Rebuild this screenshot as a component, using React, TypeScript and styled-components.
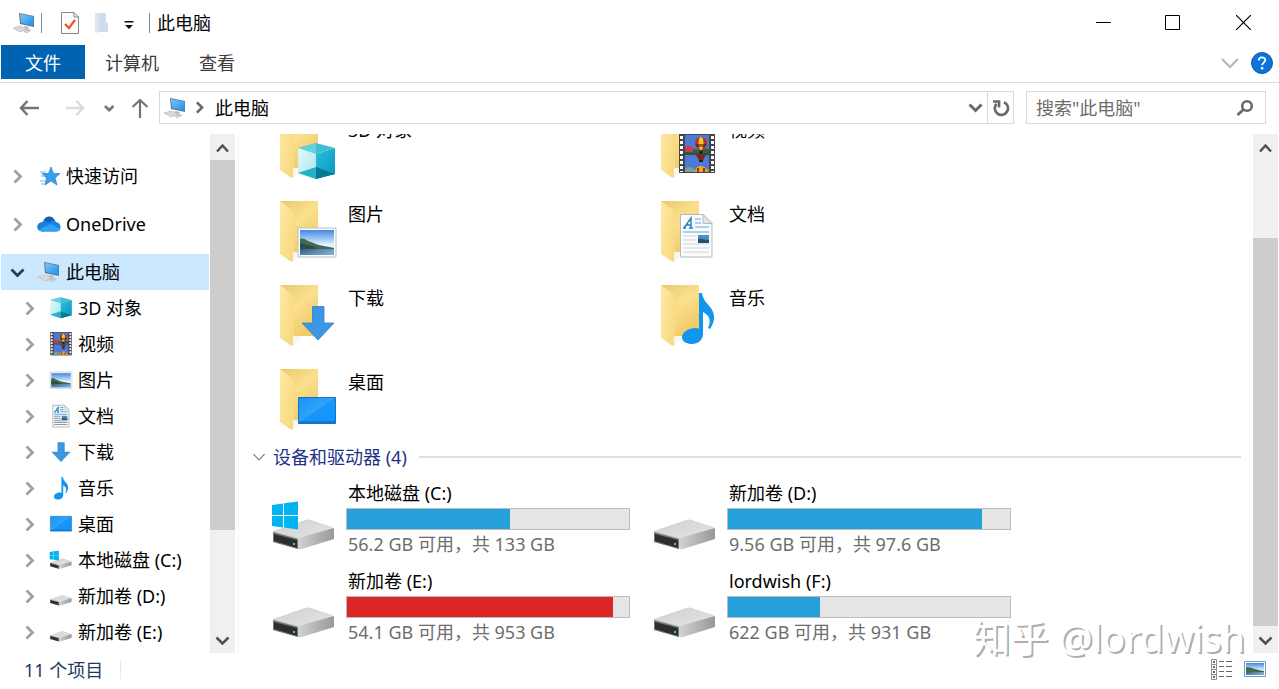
import React from "react";
import styled, { createGlobalStyle } from "styled-components";

const GlobalStyle = createGlobalStyle`
  *, *::before, *::after { box-sizing: border-box; }
  body {
    margin: 0;
    background: #fff;
    color: #111;
    font-family: "Noto Sans", "Noto Sans CJK SC", sans-serif;
    font-size: 18px;
    line-height: 24px;
  }
  button, input {
    margin: 0;
    padding: 0;
    border: 0;
    background: none;
    color: inherit;
    font: inherit;
    outline: none;
  }
  svg { display: block; flex: none; }
  ul { margin: 0; padding: 0; list-style: none; }
`;

/* ---------- layout parts ---------- */

const Window = styled.div`
  position: relative;
  display: flex;
  flex-direction: column;
  height: 100vh;
  overflow: hidden;
  background: #fff;
`;

const TitleBar = styled.header`
  display: flex;
  align-items: center;
  height: 45px;
  flex: none;
  padding: 0 1px 0 12px;
`;

const QuickTools = styled.div`
  display: flex;
  align-items: center;
  flex: 1;
`;

const Divider = styled.span<{ $left: number; $right: number }>`
  width: 1px;
  height: 20px;
  margin: 0 ${(p) => p.$right}px 0 ${(p) => p.$left}px;
  background: #8a8a8a;
`;

const ToolButton = styled.button<{ $gap: number }>`
  display: flex;
  margin-right: ${(p) => p.$gap}px;
`;

const Title = styled.h1`
  margin: 0;
  font-size: 18px;
  font-weight: 400;
  line-height: 24px;
  color: #000;
`;

const CaptionButton = styled.button`
  display: flex;
  align-items: center;
  justify-content: center;
  width: 70px;
  height: 45px;
`;

const Ribbon = styled.nav`
  display: flex;
  align-items: flex-start;
  flex: none;
  height: 38px;
  padding: 0 6px 0 1px;
  border-bottom: 1px solid #dadbdc;
`;

const Tab = styled.button<{ $active?: boolean }>`
  height: 34px;
  padding: 2px ${(p) => (p.$active ? 24 : 20)}px 0;
  background: ${(p) => (p.$active ? "#0063b1" : "transparent")};
  color: ${(p) => (p.$active ? "#fff" : "#3b3b3b")};
`;

const RibbonEnd = styled.div`
  display: flex;
  align-items: center;
  gap: 12px;
  height: 36px;
  margin-left: auto;
`;

const IconButton = styled.button`
  display: flex;
  align-items: center;
  justify-content: center;
`;

const AddressRow = styled.div`
  display: flex;
  align-items: center;
  flex: none;
  height: 51px;
  padding: 0 13px 2px 18px;
`;

const NavButtons = styled.div`
  display: grid;
  grid-template-columns: 46px 32px 24px 39px;
  align-items: center;
`;

const NavButton = styled.button`
  display: flex;
  align-items: center;
`;

const AddressBox = styled.div`
  display: flex;
  align-items: center;
  flex: 1;
  height: 33px;
  padding-left: 3px;
  border: 1px solid #d9d9d9;
`;

const PathButton = styled(IconButton)`
  margin-left: 6px;
`;

const Crumb = styled.button`
  margin-left: 9px;
  color: #000;
`;

const AddressEnd = styled.div`
  display: flex;
  align-items: stretch;
  height: 31px;
  margin-left: auto;
`;

const AddressButton = styled(IconButton)<{ $line?: boolean }>`
  width: ${(p) => (p.$line ? 26 : 24)}px;
  border-left: ${(p) => (p.$line ? "1px solid #d9d9d9" : "0")};
`;

const SearchBox = styled.form`
  display: flex;
  align-items: center;
  width: 240px;
  height: 33px;
  margin-left: 12px;
  padding: 0 11px 0 9px;
  border: 1px solid #d9d9d9;
`;

const SearchInput = styled.input`
  flex: 1;
  min-width: 0;
  &::placeholder { color: #6d6d6d; opacity: 1; }
`;

const Body = styled.div`
  display: flex;
  flex: 1;
  min-height: 0;
  padding-right: 1px;
`;

const Sidebar = styled.aside`
  display: flex;
  flex: none;
  width: 239px;
  padding: 0 3px 0 1px;
  border-right: 1px solid #f4f4f4;
`;

const Tree = styled.ul`
  flex: 1;
  overflow: hidden;
  padding-top: 24px;
`;

const TreeRow = styled.li<{ $child?: boolean; $selected?: boolean; $spaced?: boolean }>`
  display: flex;
  align-items: center;
  height: 36px;
  margin: 0 1px ${(p) => (p.$spaced ? 12 : 0)}px 0;
  padding-left: ${(p) => (p.$child ? 20 : 8)}px;
  background: ${(p) => (p.$selected ? "#cce8ff" : "transparent")};
`;

const Expander = styled.button`
  display: flex;
  align-items: center;
  justify-content: center;
  width: 17px;
  height: 24px;
  margin-right: 11px;
`;

const TreeLink = styled.a`
  display: flex;
  align-items: center;
  gap: 5px;
  color: #000;
  text-decoration: none;
  white-space: nowrap;
`;

const ScrollTrack = styled.div`
  display: flex;
  flex-direction: column;
  flex: none;
  width: 25px;
  background: #f0f0f0;
`;

const ScrollButton = styled(IconButton)`
  flex: none;
  height: 26px;
`;

const ScrollSpace = styled.div<{ $grow: number; $thumb?: boolean }>`
  flex: ${(p) => p.$grow} 1 0;
  background: ${(p) => (p.$thumb ? "#cdcdcd" : "transparent")};
`;

const Content = styled.main`
  flex: 1;
  min-width: 0;
  overflow: hidden;
`;

const Scrolled = styled.div`
  margin-top: -17px;
`;

const ItemGrid = styled.div<{ $gap: number }>`
  display: grid;
  grid-template-columns: repeat(auto-fill, 358px);
  gap: ${(p) => p.$gap}px 23px;
  padding-left: 33px;
`;

const Item = styled.div`
  display: flex;
  gap: 6px;
`;

const ItemInfo = styled.div`
  flex: 1;
`;

const ItemName = styled.div`
  padding-left: 2px;
  color: #000;
`;

const FolderName = styled(ItemName)`
  padding-top: 1px;
`;

const Meter = styled.div`
  height: 22px;
  margin: 3px 0 2px;
  border: 1px solid #bcbcbc;
  background: #e6e6e6;
`;

const MeterFill = styled.div<{ $full?: boolean }>`
  height: 100%;
  background: ${(p) => (p.$full ? "#da2626" : "#26a0da")};
`;

const Detail = styled.div`
  padding-left: 2px;
  color: #6d6d6d;
`;

const GroupHeader = styled.div`
  display: flex;
  align-items: center;
  margin: 8px 12px 12px 13px;
  height: 24px;
`;

const GroupTitle = styled.h2`
  margin: 0 12px 0 7px;
  color: #1e3287;
  font-size: 18px;
  font-weight: 400;
  line-height: 24px;
`;

const GroupLine = styled.span`
  flex: 1;
  height: 2px;
  background: #e0e0e0;
`;

const StatusBar = styled.footer`
  display: flex;
  align-items: center;
  flex: none;
  height: 36px;
  padding: 0 13px 2px 24px;
  color: #1e395b;
`;

const StatusDivider = styled.span`
  width: 1px;
  height: 18px;
  margin-left: 17px;
  background: #e8e8e8;
`;

const ViewButtons = styled.div`
  display: flex;
  align-items: center;
  gap: 11px;
  margin-left: auto;
`;

const Watermark = styled.div`
  position: absolute;
  right: 34px;
  bottom: 28px;
  color: #fff;
  font-size: 38px;
  line-height: 48px;
  text-shadow: 2px 2px 0 rgba(0, 0, 0, 0.32);
  pointer-events: none;
`;

/* ---------- drawings ---------- */

type Dir = "right" | "down" | "up";
const chevrons: Record<Dir, string> = {
  right: "M4.500 1.500l6 6-6 6",
  down: "M1.500 4.500l6 6 6-6",
  up: "M2 11.500l5.500-6 5.500 6",
};

const Chevron = ({ dir, color, weight = 2, size = 15 }: { dir: Dir; color: string; weight?: number; size?: number }) => (
  <svg width={size} height={size} viewBox="0 0 15 15" fill="none" stroke={color} strokeWidth={weight}>
    <path d={chevrons[dir]} />
  </svg>
);

const Gradients = () => (
  <svg width="0" height="0" style={{ position: "absolute" }} aria-hidden="true">
    <defs>
      <linearGradient id="flap" x1="0" y1="0" x2="1" y2="0.6">
        <stop offset="0" stopColor="#ffe9a2" />
        <stop offset="1" stopColor="#f9d982" />
      </linearGradient>
      <linearGradient id="back" x1="0" y1="0" x2="0.6" y2="1">
        <stop offset="0" stopColor="#e9ca70" />
        <stop offset="0.5" stopColor="#fbdf8c" />
        <stop offset="1" stopColor="#eecb68" />
      </linearGradient>
      <linearGradient id="sky" x1="0" y1="0" x2="0" y2="1">
        <stop offset="0" stopColor="#4a86e0" />
        <stop offset="0.4" stopColor="#a9cff4" />
        <stop offset="0.6" stopColor="#eaf5fc" />
        <stop offset="1" stopColor="#b8d8ee" />
      </linearGradient>
      <linearGradient id="water" x1="0" y1="0" x2="1" y2="0.6">
        <stop offset="0" stopColor="#2f5a86" />
        <stop offset="1" stopColor="#7ea9cf" />
      </linearGradient>
      <linearGradient id="screen" x1="0" y1="0" x2="1" y2="1">
        <stop offset="0" stopColor="#1a93f2" />
        <stop offset="0.48" stopColor="#2ea3fb" />
        <stop offset="0.5" stopColor="#1896fb" />
        <stop offset="1" stopColor="#0f93ff" />
      </linearGradient>
      <linearGradient id="cubeLeft" x1="0" y1="0" x2="1" y2="1">
        <stop offset="0" stopColor="#e4f8fa" />
        <stop offset="1" stopColor="#a4e6ee" />
      </linearGradient>
      <linearGradient id="cubeRight" x1="0" y1="0" x2="1" y2="1">
        <stop offset="0" stopColor="#2cc0dc" />
        <stop offset="1" stopColor="#0795bd" />
      </linearGradient>
      <linearGradient id="driveTop" x1="0" y1="0" x2="1" y2="1">
        <stop offset="0" stopColor="#d0d0d2" />
        <stop offset="1" stopColor="#e4e4e6" />
      </linearGradient>
      <linearGradient id="driveSide" x1="0" y1="0" x2="1" y2="0">
        <stop offset="0" stopColor="#d2d2d4" />
        <stop offset="1" stopColor="#98989b" />
      </linearGradient>
      <linearGradient id="monitor" x1="0" y1="0" x2="1" y2="1">
        <stop offset="0" stopColor="#7cc8f8" />
        <stop offset="1" stopColor="#1d8fe6" />
      </linearGradient>
    </defs>
  </svg>
);

const CubeArt = () => (
  <g>
    <path d="M44 26L63 31 44 37 26 31z" fill="#3fc0d2" />
    <path d="M44 26L26 31 44 37z" fill="#62d2df" />
    <path d="M26 31L44 37V62L26 56z" fill="url(#cubeLeft)" />
    <path d="M63 31L44 37V62L63 57z" fill="url(#cubeRight)" />
    <path d="M26 56L44 50V62z" fill="#25b2c4" />
    <path d="M63 57L44 50V62z" fill="#067a94" />
  </g>
);

const Balloon = ({ x, y }: { x: number; y: number }) => (
  <g transform={`translate(${x} ${y})`}>
    <path d="M0 4a6 6 0 0 1 12 0c0 3-2 5-4 7H4C2 9 0 7 0 4z" fill="#c42a20" />
    <path d="M3.500 4c0-4 1-6 2.500-6s2.500 2 2.500 6-1 6-2 7h-1c-1-1-2-3-2-7z" fill="#f6c928" />
    <path d="M0 5h12l-2 3H2z" fill="#3c2a12" opacity="0.600" />
    <path d="M4.500 12h3v3h-3z" fill="#2a1a10" />
  </g>
);

const FilmArt = () => (
  <g>
    <path d="M26 17h36v39H26z" fill="#454548" />
    <path d="M32 18h24v18H32zM32 38h24v17H32z" fill="#4c7ad8" />
    <path d="M32 32c3-3 6-2 9 0 5 2 10-2 15 0v4H32z" fill="#2f6434" />
    <path d="M32 30c3-3 6-1 8 1v4h-8z" fill="#c8404c" />
    <path d="M32 52c3-3 6-2 9 0s9 0 15 0v3H32z" fill="#79a58a" />
    <Balloon x={42} y={22} />
    <path d="M43 38h10l-3 5h-4z" fill="#7d241c" />
    <path d="M46 43h4v2h-4z" fill="#2a1a10" />
    <path d="M42 55c0-8 12-8 12 0z" fill="#e3a824" />
    <path d="M44 51h2v4h-2zM50 51h2v4h-2z" fill="#b4231a" />
    <path d="M28.500 19v36M59.500 19v36" stroke="#fff" strokeWidth="3" strokeDasharray="3 2" />
  </g>
);

const PictureArt = () => (
  <g>
    <path d="M26 27h38v29H26z" fill="#fdfdfd" stroke="#b4c2cc" />
    <path d="M28 29h34v25H28z" fill="url(#sky)" />
    <path d="M28 47h34v7H28z" fill="url(#water)" />
    <path d="M28 38c3-1 5 0 8 2 4 1 7 3 11 4 5 1 10 2 15 3v1H28z" fill="#43694f" />
    <path d="M28 42c6 1 12 3 18 5.500l-18 1z" fill="#2c4f45" />
  </g>
);

const DocumentArt = ({ bold }: { bold?: boolean }) => (
  <g>
    <path d="M27.500 13.500H50l9 9V56H27.500z" fill="#fafbfc" stroke="#b3babf" strokeWidth={bold ? 2 : 1} />
    <path d="M50 13.500V22.500h9z" fill="#e3e6e9" stroke="#b3babf" />
    <path d="M31 27L38 17v10M33.500 24H38M30 27h3M36 27h4" stroke="#2181b8" strokeWidth={bold ? 2 : 1.400} fill="none" />
    <path d="M42 18h6M42 22h6M42 26h14M30 31h26" stroke="#5cabd2" strokeWidth={bold ? 2 : 1} />
    <path d="M30 35h13M30 39h13M30 43h26M30 47h26M30 51h26" stroke={bold ? "#8c99a2" : "#cfd3d6"} strokeWidth={bold ? 2 : 1} />
    <path d="M45 34h11v8H45z" fill="#4b91c4" />
    <path d="M45 38c4-1 7 1 11 1v3H45z" fill="#28506a" />
  </g>
);

const ArrowArt = () => (
  <path d="M40.500 21.500H52V38h10L46 55 30 38h10.500z" fill="#3b97e4" stroke="#2b83cf" strokeWidth="0.800" />
);

const NoteArt = () => (
  <path
    d="M46 8h3c1 7 5 10 8 14 5 6 6 13 0 22l-2-1c3-6 2-11-2-14l-3-2v22c0 6-5 10-11 10-5 0-10-2-10-7s7-9 13-9c2 0 3 0 4 1z"
    fill="#1295ee"
  />
);

const DesktopArt = () => (
  <g>
    <path d="M26.500 28.500h37v26h-37z" fill="url(#screen)" stroke="#1673bd" />
    <path d="M27 52h36v2H27z" fill="#0d62ac" opacity="0.500" />
  </g>
);

const DriveArt = () => (
  <g>
    <path d="M1 49L33 38q3-1 6 0L60 45q2 1 0 2L26 56z" fill="url(#driveTop)" />
    <path d="M26 56L62 46V57L30 67q-4 1-4-1z" fill="url(#driveSide)" />
    <path d="M1 49L26 56V67L1 60z" fill="#c3c3c5" />
    <path d="M1 50L26 57V67L1 60z" fill="#77777a" />
    <path d="M2 52L25 58V66L2 59z" fill="#2c2e30" />
    <path d="M21 61h2v2h-2z" fill="#4be05c" />
  </g>
);

const WindowsArt = () => (
  <path d="M0 22l11-1.500V32H0zM12 20.300L26 18.500V32H12zM0 33h11v11.500L0 43zM12 33h14v13.500l-14-2z" fill="#00b4f0" transform="translate(0 1)" />
);

const PcArt = () => (
  <g>
    <path d="M7 2l15 3v11L8 13z" fill="#5d7688" />
    <path d="M8 3l13.500 2.500v9.500L9 12z" fill="url(#monitor)" />
    <path d="M12 15l5 1-1 2 4 1-3 1-6-2z" fill="#b4babf" />
    <path d="M1 17l7-2 7 3-7 3z" fill="#e9ebed" stroke="#b9bec3" strokeWidth="0.800" />
    <path d="M3 17l8 3M6 16l7 3M12 20l4-1 2 1-4 2z" stroke="#b9bec3" strokeWidth="0.800" fill="#d8dbde" />
  </g>
);

const art = {
  cube: <CubeArt />,
  film: <FilmArt />,
  picture: <PictureArt />,
  document: <DocumentArt />,
  arrow: <ArrowArt />,
  note: <NoteArt />,
  desktop: <DesktopArt />,
};
type ArtName = keyof typeof art;

const FolderIcon = ({ kind }: { kind: ArtName }) => (
  <svg width="68" height="68" viewBox="0 0 68 68">
    <path d="M8 0H46V51H20z" fill="url(#back)" />
    <path d="M20 51h8v4l-7 5z" fill="#f8f6f0" />
    <path d="M8 0L20 9q2 1 2 3V51l-1 1v9l-3-1L8 53z" fill="url(#flap)" />
    {art[kind]}
  </svg>
);

const DriveIcon = ({ system }: { system?: boolean }) => (
  <svg width="68" height="69" viewBox="0 -1 68 69">
    <DriveArt />
    {system && <WindowsArt />}
  </svg>
);

const PcIcon = () => (
  <svg width="24" height="24" viewBox="0 0 24 24"><PcArt /></svg>
);

const SmallIcon = ({ box, children }: { box: string; children: React.ReactNode }) => (
  <svg width="24" height="24" viewBox={box}>{children}</svg>
);

const smallIcons: Record<string, React.ReactNode> = {
  star: (
    <SmallIcon box="0 0 24 24">
      <path d="M14 3l2.500 6.500H23l-5 4.500 2 7-6-4-6 4 1.500-7L5 9.500h6.500z" fill="#36a0ea" stroke="#2a8ad0" strokeWidth="0.800" />
      <path d="M3 8h6M4 12h4M3 17h5M4 20h4" stroke="#6bbcf1" />
    </SmallIcon>
  ),
  cloud: (
    <SmallIcon box="0 0 24 24">
      <path d="M6 10C8 3 16 3 18 9l-7 8-5-3z" fill="#0f5fb4" />
      <path d="M5 10c4-2 7 0 9 2l-8 7.500C-1 20-2 11 5 10z" fill="#1b80d8" />
      <path d="M12 11c3-3 6-3 7-1 6 1 6 9 0 9.500H6c-3 0-4-1-5-2.500z" fill="#1687e0" />
      <path d="M1.500 17.500L14 12l9.500 5c-1 2-2.500 2.500-4 2.500H6c-2 0-3.500-.5-4.500-2z" fill="#2ba3ef" />
    </SmallIcon>
  ),
  pc: <PcIcon />,
  cube: <SmallIcon box="24 24 41 41"><CubeArt /></SmallIcon>,
  film: <SmallIcon box="24 17 40 40"><FilmArt /></SmallIcon>,
  picture: <SmallIcon box="24 20 42 42"><PictureArt /></SmallIcon>,
  document: <SmallIcon box="20 11 47 47"><DocumentArt bold /></SmallIcon>,
  arrow: <SmallIcon box="25 17 42 42"><ArrowArt /></SmallIcon>,
  note: <SmallIcon box="18 6 54 54"><NoteArt /></SmallIcon>,
  desktop: <SmallIcon box="24 21 42 42"><DesktopArt /></SmallIcon>,
  system: <SmallIcon box="-2 12 68 68"><g transform="translate(0 4)"><DriveArt /></g><WindowsArt /></SmallIcon>,
  drive: <SmallIcon box="-2 12 68 68"><g transform="translate(0 6)"><DriveArt /></g></SmallIcon>,
};

/* ---------- data ---------- */

interface TreeEntry { label: string; icon: string; child?: boolean; open?: boolean; spaced?: boolean }
const tree: TreeEntry[] = [
  { label: "快速访问", icon: "star", spaced: true },
  { label: "OneDrive", icon: "cloud", spaced: true },
  { label: "此电脑", icon: "pc", open: true },
  { label: "3D 对象", icon: "cube", child: true },
  { label: "视频", icon: "film", child: true },
  { label: "图片", icon: "picture", child: true },
  { label: "文档", icon: "document", child: true },
  { label: "下载", icon: "arrow", child: true },
  { label: "音乐", icon: "note", child: true },
  { label: "桌面", icon: "desktop", child: true },
  { label: "本地磁盘 (C:)", icon: "system", child: true },
  { label: "新加卷 (D:)", icon: "drive", child: true },
  { label: "新加卷 (E:)", icon: "drive", child: true },
];

const folders: { label: string; kind: ArtName }[] = [
  { label: "3D 对象", kind: "cube" },
  { label: "视频", kind: "film" },
  { label: "图片", kind: "picture" },
  { label: "文档", kind: "document" },
  { label: "下载", kind: "arrow" },
  { label: "音乐", kind: "note" },
  { label: "桌面", kind: "desktop" },
];

const drives = [
  { label: "本地磁盘 (C:)", detail: "56.2 GB 可用，共 133 GB", used: 57.7, system: true },
  { label: "新加卷 (D:)", detail: "9.56 GB 可用，共 97.6 GB", used: 90.2 },
  { label: "新加卷 (E:)", detail: "54.1 GB 可用，共 953 GB", used: 94.3 },
  { label: "lordwish (F:)", detail: "622 GB 可用，共 931 GB", used: 32.6 },
];

const Scrollbar = ({ before, thumb, after }: { before: number; thumb: number; after: number }) => (
  <ScrollTrack>
    <ScrollButton aria-label="向上滚动"><Chevron dir="up" color="#505050" weight={2.5} /></ScrollButton>
    <ScrollSpace $grow={before} />
    <ScrollSpace $grow={thumb} $thumb />
    <ScrollSpace $grow={after} />
    <ScrollButton aria-label="向下滚动"><Chevron dir="down" color="#505050" weight={2.5} /></ScrollButton>
  </ScrollTrack>
);

export default function App() {
  return (
    <Window lang="zh-CN">
      <GlobalStyle />
      <Gradients />

      <TitleBar>
        <QuickTools>
          <PcIcon />
          <Divider $left={5} $right={19} />
          <ToolButton $gap={15} aria-label="属性">
            <svg width="18" height="22" viewBox="0 0 18 22" fill="none">
              <path d="M.5.5h12.500L17.500 5v16.500H.5z" fill="#fdfdfd" stroke="#858585" />
              <path d="M13 .5V5h4.500" stroke="#858585" />
              <path d="M4 12l4 4 6-8" stroke="#e35a24" strokeWidth="2.200" />
            </svg>
          </ToolButton>
          <ToolButton $gap={15} aria-label="新建文件夹">
            <svg width="15" height="22" viewBox="0 0 15 22">
              <path d="M1 1h11v10h2v9H4z" fill="#cfdcea" />
              <path d="M1 1l4 3v17l-4-1z" fill="#dfe8f2" />
            </svg>
          </ToolButton>
          <ToolButton $gap={0} aria-label="自定义快速访问工具栏">
            <svg width="10" height="14" viewBox="0 0 10 14">
              <path d="M.5 5h9v1.500h-9zM1 9h8l-4 4z" fill="#111" />
            </svg>
          </ToolButton>
          <Divider $left={15} $right={7} />
          <Title>此电脑</Title>
        </QuickTools>
        <CaptionButton aria-label="最小化">
          <svg width="15" height="15" viewBox="0 0 15 15"><path d="M0 7.500h15" stroke="#000" /></svg>
        </CaptionButton>
        <CaptionButton aria-label="最大化">
          <svg width="16" height="15" viewBox="0 0 16 15"><path d="M.5.5h14v14H.5z" fill="none" stroke="#000" /></svg>
        </CaptionButton>
        <CaptionButton aria-label="关闭">
          <svg width="15" height="15" viewBox="0 0 15 15"><path d="M0 0l15 15M15 0L0 15" stroke="#000" strokeWidth="1.200" /></svg>
        </CaptionButton>
      </TitleBar>

      <Ribbon>
        <Tab $active>文件</Tab>
        <Tab>计算机</Tab>
        <Tab>查看</Tab>
        <RibbonEnd>
          <IconButton aria-label="展开功能区">
            <svg width="18" height="18" viewBox="0 0 18 18" fill="none" stroke="#b4b4b4" strokeWidth="2">
              <path d="M1 5l8 8 8-8" />
            </svg>
          </IconButton>
          <IconButton aria-label="帮助">
            <svg width="22" height="22" viewBox="0 0 22 22">
              <circle cx="11" cy="11" r="10.500" fill="#0a74d8" stroke="#0b5cad" />
              <path d="M7.800 8.400c0-4 6.500-4 6.500-.3 0 2.400-3.200 2.600-3.200 5.200" fill="none" stroke="#fff" strokeWidth="1.800" />
              <circle cx="11.100" cy="16.300" r="1.300" fill="#fff" />
            </svg>
          </IconButton>
        </RibbonEnd>
      </Ribbon>

      <AddressRow>
        <NavButtons>
          <NavButton aria-label="后退">
            <svg width="22" height="18" viewBox="0 0 22 18" fill="none" stroke="#747474" strokeWidth="2.500">
              <path d="M9.500 2L3 9l6.500 7M3 9h18" />
            </svg>
          </NavButton>
          <NavButton aria-label="前进">
            <svg width="22" height="18" viewBox="0 0 22 18" fill="none" stroke="#dadada" strokeWidth="2.500">
              <path d="M12.500 2L19 9l-6.500 7M19 9H2" />
            </svg>
          </NavButton>
          <NavButton aria-label="最近浏览的位置">
            <svg width="24" height="12" viewBox="0 0 24 12" fill="none" stroke="#747474" strokeWidth="2.500">
              <path d="M9 4l4.200 4.200L17.400 4" />
            </svg>
          </NavButton>
          <NavButton aria-label="上移">
            <svg width="32" height="20" viewBox="0 0 32 20" fill="none" stroke="#747474" strokeWidth="2.200">
              <path d="M12.500 9L20 2l7.500 7M20 2v18" />
            </svg>
          </NavButton>
        </NavButtons>
        <AddressBox>
          <PcIcon />
          <PathButton aria-label="展开路径">
            <Chevron dir="right" color="#6a6a6a" weight={3} size={13} />
          </PathButton>
          <Crumb>此电脑</Crumb>
          <AddressEnd>
            <AddressButton aria-label="以前的位置"><Chevron dir="down" color="#6a6a6a" weight={3} /></AddressButton>
            <AddressButton $line aria-label="刷新">
              <svg width="18" height="18" viewBox="0 0 18 18" fill="none" stroke="#6a6a6a" strokeWidth="2.700">
                <path d="M12 3.200A6.600 6.600 0 1 1 4.500 4.800" />
                <path d="M1 2.500h6v6" />
              </svg>
            </AddressButton>
          </AddressEnd>
        </AddressBox>
        <SearchBox role="search">
          <SearchInput aria-label="搜索" placeholder={'搜索"此电脑"'} />
          <IconButton type="button" aria-label="搜索">
            <svg width="18" height="18" viewBox="0 0 18 18" fill="none" stroke="#6a6a6a">
              <circle cx="11" cy="7" r="4.800" strokeWidth="2.600" />
              <path d="M7.500 10.500L1.500 16" strokeWidth="3" />
            </svg>
          </IconButton>
        </SearchBox>
      </AddressRow>

      <Body>
        <Sidebar>
          <Tree>
            {tree.map((t) => (
              <TreeRow key={t.label} $child={t.child} $selected={t.open} $spaced={t.spaced}>
                <Expander aria-label={t.open ? "折叠" : "展开"}>
                  <Chevron dir={t.open ? "down" : "right"} color={t.open ? "#2c3e4c" : "#a0a0a0"} weight={2.8} />
                </Expander>
                <TreeLink href="#">
                  {smallIcons[t.icon]}
                  {t.label}
                </TreeLink>
              </TreeRow>
            ))}
          </Tree>
          <Scrollbar before={0} thumb={370} after={97} />
        </Sidebar>

        <Content>
          <Scrolled>
            <ItemGrid $gap={16}>
              {folders.map((f) => (
                <Item key={f.label}>
                  <FolderIcon kind={f.kind} />
                  <FolderName>{f.label}</FolderName>
                </Item>
              ))}
            </ItemGrid>
            <GroupHeader>
              <IconButton aria-label="折叠分组"><Chevron dir="down" color="#6f6f6f" weight={1.2} size={14} /></IconButton>
              <GroupTitle>设备和驱动器 (4)</GroupTitle>
              <GroupLine />
            </GroupHeader>
            <ItemGrid $gap={13}>
              {drives.map((d) => (
                <Item key={d.label}>
                  <DriveIcon system={d.system} />
                  <ItemInfo>
                    <ItemName>{d.label}</ItemName>
                    <Meter role="meter" aria-label={d.label} aria-valuemin={0} aria-valuemax={100} aria-valuenow={d.used}>
                      <MeterFill $full={d.used > 92} style={{ width: `${d.used}%` }} />
                    </Meter>
                    <Detail>{d.detail}</Detail>
                  </ItemInfo>
                </Item>
              ))}
            </ItemGrid>
          </Scrolled>
        </Content>
        <Scrollbar before={78} thumb={388} after={1} />
      </Body>

      <StatusBar>
        11 个项目
        <StatusDivider />
        <ViewButtons>
          <IconButton aria-label="详细信息">
            <svg width="22" height="22" viewBox="0 0 22 22" fill="none">
              <path d="M.5.5h5v5h-5zM.5 5.500h5v5h-5zM.5 10.500h5v5h-5zM.5 15.500h5v5h-5z" stroke="#8d8d8d" />
              <path d="M2 3h2M2 8h2M2 13h2M2 18h2" stroke="#333" strokeWidth="1.500" />
              <path d="M8 2.500h5M15 2.500h6M8 7.500h5M15 7.500h6M8 12.500h5M15 12.500h6M8 17.500h5M15 17.500h6" stroke="#666" />
            </svg>
          </IconButton>
          <IconButton aria-label="大缩略图">
            <svg width="22" height="18" viewBox="0 0 22 18">
              <path d="M.5.5h21v15H.5z" fill="#fff" stroke="#6a9fc9" />
              <path d="M2 2h18v12H2z" fill="url(#sky)" />
              <path d="M2 10h18v4H2z" fill="url(#water)" />
              <path d="M2 6c5 0 10 3 18 4v1H2z" fill="#3f6b50" />
            </svg>
          </IconButton>
        </ViewButtons>
      </StatusBar>

      <Watermark>知乎 @lordwish</Watermark>
    </Window>
  );
}
